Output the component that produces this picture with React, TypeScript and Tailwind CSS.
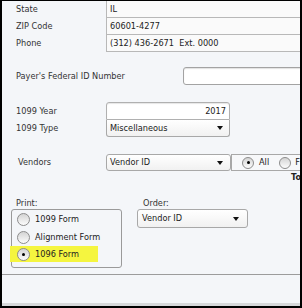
const Arrow = () => (
  <svg width="6" height="4" viewBox="0 0 6 4" className="shrink-0">
    <path d="M0 0 L6 0 L3 4 Z" fill="#111" />
  </svg>
);

const Radio = ({ checked, size = 13 }: { checked?: boolean; size?: number }) => (
  <span
    className={`flex shrink-0 items-center justify-center rounded-full border border-[#8c8c8c] bg-gradient-to-b from-[#d4d4d4] to-[#fcfcfc] ${
      size === 13 ? "h-[13px] w-[13px]" : "h-[12px] w-[12px]"
    }`}
  >
    {checked && <span className="h-[3px] w-[3px] rounded-full bg-black" />}
  </span>
);

const topRows = [
  ["State", "IL"],
  ["ZIP Code", "60601-4277"],
  ["Phone", "(312) 436-2671\u00a0\u00a0Ext. 0000"],
];

export default function App() {
  return (
    <div className="h-[308px] w-[302px] overflow-hidden bg-black px-[2px] pb-[2px] pt-px font-['DejaVu_Sans',Verdana,sans-serif] text-[8.2px] text-[#333]">
      <div className="flex h-full flex-col overflow-hidden bg-[#f4f6f9]">
        {/* address block */}
        {topRows.map(([label, value]) => (
          <div key={label} className="flex h-[17px] shrink-0 items-center">
            <span className="w-[104px] shrink-0 pl-[14px]">{label}</span>
            <div className="flex h-full w-[220px] shrink-0 items-center border-x border-b border-[#b8b8b8] bg-[#fafafa] pl-[3px] text-[#222]">
              {value}
            </div>
          </div>
        ))}

        {/* payer id */}
        <div className="mt-[15px] flex h-[18px] shrink-0 items-center">
          <span className="w-[181px] shrink-0 pl-[14px]">Payer's Federal ID Number</span>
          <div className="h-full w-[140px] shrink-0 rounded-l-[3px] border border-[#a3a3a3] bg-white shadow-[inset_0_1px_1px_rgba(0,0,0,0.12)]" />
        </div>

        {/* 1099 year / type */}
        <div className="mt-[17px] flex h-[18px] shrink-0 items-center">
          <span className="w-[104px] shrink-0 pl-[14px]">1099 Year</span>
          <div className="flex h-full w-[124px] shrink-0 items-center justify-end rounded-t-[3px] border border-[#b0b0b0] bg-white pr-[3px] text-[#222] shadow-[inset_0_1px_1px_rgba(0,0,0,0.1)]">
            2017
          </div>
        </div>
        <div className="flex h-[17px] shrink-0 items-center">
          <span className="w-[104px] shrink-0 pl-[14px]">1099 Type</span>
          <div className="flex h-full w-[124px] shrink-0 items-center justify-between rounded-b-[3px] border-x border-b border-[#a8a8a8] bg-gradient-to-b from-white to-[#f1f1f1] pl-[3px] pr-[6px] text-[#222]">
            <span>Miscellaneous</span>
            <Arrow />
          </div>
        </div>

        {/* vendors */}
        <div className="mt-[17px] flex h-[17px] shrink-0 items-center">
          <span className="w-[104px] shrink-0 pl-[16px]">Vendors</span>
          <div className="flex h-full w-[125px] shrink-0 items-center justify-between rounded-[3px] border border-[#a8a8a8] bg-gradient-to-b from-white to-[#f1f1f1] pl-[3px] pr-[7px] text-[#222]">
            <span>Vendor ID</span>
            <Arrow />
          </div>
          <div className="flex h-full w-[90px] shrink-0 items-center border-y border-l border-[#a8a8a8] bg-[#f7f8fa] pl-[10px] text-[#222]">
            <Radio checked size={12} />
            <span className="ml-[5px] shrink-0">All</span>
            <span className="ml-[10px] shrink-0">
              <Radio size={12} />
            </span>
            <span className="ml-[4px] shrink-0">F</span>
          </div>
        </div>
        <div className="flex h-[12px] shrink-0 items-center pl-[289px] font-bold text-[#222]">
          <span className="shrink-0">To</span>
        </div>

        {/* print / order */}
        <div className="mt-[14px] flex shrink-0">
          <div className="w-[126px] shrink-0 pl-[9px]">
            <div className="flex h-[12px] items-center pl-[5px]">Print:</div>
            <div className="flex h-[59px] w-[111px] flex-col rounded-[3px] border border-[#9a9a9a] text-[#222]">
              <div className="flex h-[18px] items-center pl-[5px]">
                <Radio />
                <span className="ml-[5px]">1099 Form</span>
              </div>
              <div className="flex h-[18px] items-center pl-[5px]">
                <Radio />
                <span className="ml-[5px]">Alignment Form</span>
              </div>
              <div className="-ml-[2px] flex h-[16px] w-[88px] items-center bg-[#f5f53f] pl-[7px]">
                <Radio checked />
                <span className="ml-[5px]">1096 Form</span>
              </div>
            </div>
          </div>
          <div className="ml-[9px] w-[111px] shrink-0">
            <div className="flex h-[12px] items-center pl-[6px]">Order:</div>
            <div className="flex h-[19px] w-[111px] items-center justify-between rounded-[3px] border border-[#a8a8a8] bg-gradient-to-b from-white to-[#f1f1f1] pl-[4px] pr-[8px] text-[#222]">
              <span>Vendor ID</span>
              <Arrow />
            </div>
          </div>
        </div>

        {/* footer */}
        <div className="mt-[6px] flex-1 border-t border-[#9c9c9c]" />
        <div className="h-[3px] shrink-0 bg-[#d6d8da]" />
      </div>
    </div>
  );
}
